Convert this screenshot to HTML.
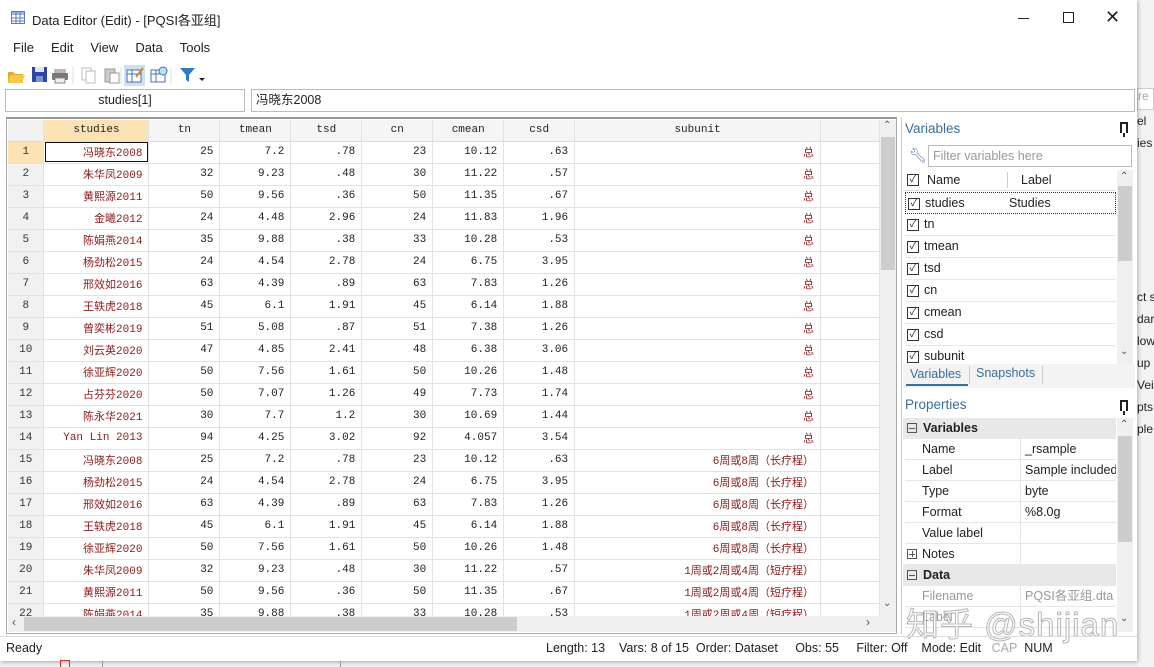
<!DOCTYPE html>
<html><head><meta charset="utf-8">
<style>
*{box-sizing:border-box;margin:0;padding:0}
body{width:1154px;height:667px;overflow:hidden;background:#f0f0f0;font-family:"Liberation Sans","Noto Sans CJK SC",sans-serif;font-size:13px;color:#222;position:relative}
.abs{position:absolute}
.win{left:0;top:0;width:1137px;height:661px;background:#fff;box-shadow:1px 1px 4px rgba(0,0,0,.3)}
.menu span{margin-right:17px}
table{border-collapse:collapse;table-layout:fixed;font-family:"Liberation Mono","Noto Sans CJK SC",monospace;font-size:11px}
td,th{height:22px;border-right:1px solid #e2e2e2;border-bottom:1px solid #e2e2e2;padding:0 6px;text-align:right;white-space:nowrap;overflow:hidden}
th{font-weight:normal;text-align:center;background:#f5f5f5;height:21px;border-bottom:1px solid #ddd}
td.rn{background:#f1f1f1;text-align:center;color:#333}
td.s{color:#8b1a1a}
.vrow{position:absolute;left:905px;width:211px;height:22px;border-bottom:1px solid #e6e6e6;font-size:12.5px;line-height:21px}
.cb{position:absolute;left:2px;top:5px;width:12px;height:12px;border:1px solid #333;font-size:10px;line-height:10px;text-align:center}
.prow{position:absolute;left:905px;width:211px;height:21px;font-size:12.5px;line-height:21px;border-bottom:1px solid #e6e6e6}
.prow .k{position:absolute;left:17px;width:98px;height:21px}
.prow .v{position:absolute;left:115px;border-left:1px solid #e6e6e6;padding-left:4px;height:21px;width:96px;overflow:hidden;white-space:nowrap}
.pin{position:absolute;width:8px;height:11px;border:2px solid #222;border-bottom:none}
.pin:after{content:"";position:absolute;left:1px;top:9px;width:2px;height:4px;background:#222}
</style></head><body>
<div class="abs" style="left:1137px;top:0;width:17px;height:667px;background:#f3f3f3"></div>
<div class="abs" style="left:1137px;top:88px;width:17px;height:22px;border:1px solid #ccc;background:#fff;color:#aaa;font-size:12px">re</div>
<div class="abs" style="left:1137px;top:110px;font-size:12px;line-height:22px">el<br>ies<br><br><br><br><br><br><br>ct s<br>dar<br>low<br>up<br>Veig<br>pts<br>ple</div>
<div class="abs win">
 <svg class="abs" style="left:11px;top:11px" width="14" height="13"><rect x=".5" y=".5" width="13" height="12" fill="#fff" stroke="#5a7db5"/><rect x="1" y="1" width="12" height="3" fill="#9bb5dd"/><path d="M1 7h12M1 10h12M5 1v12M9 1v12" stroke="#5a7db5"/></svg>
 <div class="abs" style="left:32px;top:10px;font-size:13px">Data Editor (Edit) - [PQSI各亚组]</div>
 <div class="abs" style="left:1018px;top:18px;width:11px;height:1px;background:#222"></div>
 <div class="abs" style="left:1063px;top:12px;width:11px;height:11px;border:1px solid #222"></div>
 <div class="abs" style="left:1105px;top:7px;font-size:18px;font-weight:300">✕</div>
 <div class="abs menu" style="left:13px;top:40px;font-size:13px"><span>File</span><span>Edit</span><span>View</span><span>Data</span><span>Tools</span></div>
 <svg class="abs" style="left:6px;top:64px" width="210" height="22">
  <path d="M2 8h5l2 2h8v9H2z" fill="#e8a82a"/><path d="M4 11h15l-3 8H2z" fill="#f7c948"/>
  <rect x="26" y="3" width="15" height="15" fill="#2c47a8"/><rect x="29" y="3" width="9" height="5" fill="#dfe6f5"/><rect x="30" y="12" width="7" height="6" fill="#7d93c9"/>
  <rect x="48" y="5" width="12" height="5" fill="#bbb"/><rect x="46" y="9" width="16" height="7" rx="1" fill="#777"/><rect x="49" y="14" width="10" height="5" fill="#eee" stroke="#888"/>
  <rect x="76" y="4" width="9" height="12" fill="#fff" stroke="#bbb"/><rect x="80" y="7" width="9" height="12" fill="#fff" stroke="#bbb"/>
  <rect x="99" y="5" width="10" height="13" fill="#ccc" stroke="#999"/><rect x="104" y="9" width="9" height="10" fill="#fff" stroke="#999"/>
  <rect x="118" y="1" width="21" height="21" fill="#cfe0f4"/><rect x="121" y="6" width="14" height="12" fill="#fff" stroke="#4a6fb0"/><path d="M121 10h14M126 6v12" stroke="#4a6fb0"/><path d="M130 13l7-9" stroke="#c98a2a" stroke-width="2"/>
  <rect x="145" y="6" width="14" height="12" fill="#fff" stroke="#4a6fb0"/><path d="M145 10h14M150 6v12" stroke="#4a6fb0"/><circle cx="157" cy="7" r="4" fill="#bde0f4" stroke="#3a7aa0"/>
  <path d="M174 4h15l-6 7v7l-3-2v-5z" fill="#2f7ad0"/><path d="M193 14h6l-3 3z" fill="#222"/>
  <path d="M67 3v17M115 3v17M165 3v17" stroke="#ddd"/>
 </svg>
 <div class="abs" style="left:5px;top:89px;width:240px;height:23px;border:1px solid #bbb;text-align:center;line-height:21px;font-size:12.5px">studies[1]</div>
 <div class="abs" style="left:251px;top:89px;width:884px;height:23px;border:1px solid #bbb;padding-left:4px;line-height:21px;font-size:12.5px">冯晓东2008</div>
 <div class="abs" style="left:6px;top:117px;width:891px;height:517px;border:1px solid #aaa;border-top:2px solid #999"></div>
 <div class="abs" style="left:8px;top:120px;width:872px;height:496px;overflow:hidden;background:#fff">
 <table>
  <colgroup><col style="width:36px"><col style="width:105px"><col style="width:71px"><col style="width:71px"><col style="width:71px"><col style="width:71px"><col style="width:71px"><col style="width:71px"><col style="width:246px"><col style="width:59px"></colgroup>
  <tr><th style="background:#f1f1f1"></th><th style="background:#fbe3b6">studies</th><th>tn</th><th>tmean</th><th>tsd</th><th>cn</th><th>cmean</th><th>csd</th><th>subunit</th><th></th></tr>
  <tr><td class="rn" style="background:#fbe3b6">1</td><td class="s" style="outline:1.5px solid #111;outline-offset:-2px">冯晓东2008</td><td>25</td><td>7.2</td><td>.78</td><td>23</td><td>10.12</td><td>.63</td><td class="s">总</td><td></td></tr>
  <tr><td class="rn">2</td><td class="s">朱华凤2009</td><td>32</td><td>9.23</td><td>.48</td><td>30</td><td>11.22</td><td>.57</td><td class="s">总</td><td></td></tr>
  <tr><td class="rn">3</td><td class="s">黄熙源2011</td><td>50</td><td>9.56</td><td>.36</td><td>50</td><td>11.35</td><td>.67</td><td class="s">总</td><td></td></tr>
  <tr><td class="rn">4</td><td class="s">金曦2012</td><td>24</td><td>4.48</td><td>2.96</td><td>24</td><td>11.83</td><td>1.96</td><td class="s">总</td><td></td></tr>
  <tr><td class="rn">5</td><td class="s">陈娟燕2014</td><td>35</td><td>9.88</td><td>.38</td><td>33</td><td>10.28</td><td>.53</td><td class="s">总</td><td></td></tr>
  <tr><td class="rn">6</td><td class="s">杨劲松2015</td><td>24</td><td>4.54</td><td>2.78</td><td>24</td><td>6.75</td><td>3.95</td><td class="s">总</td><td></td></tr>
  <tr><td class="rn">7</td><td class="s">邢效如2016</td><td>63</td><td>4.39</td><td>.89</td><td>63</td><td>7.83</td><td>1.26</td><td class="s">总</td><td></td></tr>
  <tr><td class="rn">8</td><td class="s">王轶虎2018</td><td>45</td><td>6.1</td><td>1.91</td><td>45</td><td>6.14</td><td>1.88</td><td class="s">总</td><td></td></tr>
  <tr><td class="rn">9</td><td class="s">曾奕彬2019</td><td>51</td><td>5.08</td><td>.87</td><td>51</td><td>7.38</td><td>1.26</td><td class="s">总</td><td></td></tr>
  <tr><td class="rn">10</td><td class="s">刘云英2020</td><td>47</td><td>4.85</td><td>2.41</td><td>48</td><td>6.38</td><td>3.06</td><td class="s">总</td><td></td></tr>
  <tr><td class="rn">11</td><td class="s">徐亚辉2020</td><td>50</td><td>7.56</td><td>1.61</td><td>50</td><td>10.26</td><td>1.48</td><td class="s">总</td><td></td></tr>
  <tr><td class="rn">12</td><td class="s">占芬芬2020</td><td>50</td><td>7.07</td><td>1.26</td><td>49</td><td>7.73</td><td>1.74</td><td class="s">总</td><td></td></tr>
  <tr><td class="rn">13</td><td class="s">陈永华2021</td><td>30</td><td>7.7</td><td>1.2</td><td>30</td><td>10.69</td><td>1.44</td><td class="s">总</td><td></td></tr>
  <tr><td class="rn">14</td><td class="s">Yan Lin 2013</td><td>94</td><td>4.25</td><td>3.02</td><td>92</td><td>4.057</td><td>3.54</td><td class="s">总</td><td></td></tr>
  <tr><td class="rn">15</td><td class="s">冯晓东2008</td><td>25</td><td>7.2</td><td>.78</td><td>23</td><td>10.12</td><td>.63</td><td class="s">6周或8周（长疗程）</td><td></td></tr>
  <tr><td class="rn">16</td><td class="s">杨劲松2015</td><td>24</td><td>4.54</td><td>2.78</td><td>24</td><td>6.75</td><td>3.95</td><td class="s">6周或8周（长疗程）</td><td></td></tr>
  <tr><td class="rn">17</td><td class="s">邢效如2016</td><td>63</td><td>4.39</td><td>.89</td><td>63</td><td>7.83</td><td>1.26</td><td class="s">6周或8周（长疗程）</td><td></td></tr>
  <tr><td class="rn">18</td><td class="s">王轶虎2018</td><td>45</td><td>6.1</td><td>1.91</td><td>45</td><td>6.14</td><td>1.88</td><td class="s">6周或8周（长疗程）</td><td></td></tr>
  <tr><td class="rn">19</td><td class="s">徐亚辉2020</td><td>50</td><td>7.56</td><td>1.61</td><td>50</td><td>10.26</td><td>1.48</td><td class="s">6周或8周（长疗程）</td><td></td></tr>
  <tr><td class="rn">20</td><td class="s">朱华凤2009</td><td>32</td><td>9.23</td><td>.48</td><td>30</td><td>11.22</td><td>.57</td><td class="s">1周或2周或4周（短疗程）</td><td></td></tr>
  <tr><td class="rn">21</td><td class="s">黄熙源2011</td><td>50</td><td>9.56</td><td>.36</td><td>50</td><td>11.35</td><td>.67</td><td class="s">1周或2周或4周（短疗程）</td><td></td></tr>
  <tr><td class="rn">22</td><td class="s">陈娟燕2014</td><td>35</td><td>9.88</td><td>.38</td><td>33</td><td>10.28</td><td>.53</td><td class="s">1周或2周或4周（短疗程）</td><td></td></tr>
 </table>
 </div>
 <div class="abs" style="left:880px;top:120px;width:16px;height:496px;background:#f0f0f0"></div>
 <div class="abs" style="left:881px;top:137px;width:14px;height:133px;background:#cdcdcd"></div>
 <div class="abs" style="left:883px;top:120px;font-size:10px;color:#555">⌃</div>
 <div class="abs" style="left:883px;top:598px;font-size:10px;color:#555">⌄</div>
 <div class="abs" style="left:8px;top:616px;width:888px;height:16px;background:#f0f0f0"></div>
 <div class="abs" style="left:24px;top:617px;width:493px;height:14px;background:#cdcdcd"></div>
 <div class="abs" style="left:12px;top:615px;font-size:12px;color:#555">‹</div>
 <div class="abs" style="left:866px;top:615px;font-size:12px;color:#555">›</div>
 <div class="abs" style="left:901px;top:117px;width:236px;height:517px;border-left:1px solid #ccc;background:#fff"></div>
 <div class="abs" style="left:905px;top:121px;color:#3a6d99;font-size:13.5px">Variables</div>
 <div class="pin" style="left:1120px;top:122px"></div>
 <div class="abs" style="left:909px;top:147px;color:#5a7ab0;font-size:14px">🔧︎</div>
 <div class="abs" style="left:928px;top:145px;width:204px;height:22px;border:1px solid #bbb;color:#999;padding-left:4px;line-height:20px;font-size:12.5px">Filter variables here</div>
 <div class="abs" style="left:903px;top:170px;width:213px;height:21px;background:#fff;border-bottom:1px solid #ddd;font-size:12.5px;line-height:20px">
  <div class="cb" style="left:4px;top:4px">✓</div><span style="position:absolute;left:24px">Name</span><div style="position:absolute;left:104px;top:2px;width:1px;height:16px;background:#ccc"></div><span style="position:absolute;left:118px">Label</span></div>
 <div class="vrow" style="top:192px;border:1px dotted #333"><div class="cb">✓</div><span style="position:absolute;left:19px">studies</span><span style="position:absolute;left:103px">Studies</span></div>
 <div class="vrow" style="top:214px"><div class="cb">✓</div><span style="position:absolute;left:19px">tn</span></div>
 <div class="vrow" style="top:236px"><div class="cb">✓</div><span style="position:absolute;left:19px">tmean</span></div>
 <div class="vrow" style="top:258px"><div class="cb">✓</div><span style="position:absolute;left:19px">tsd</span></div>
 <div class="vrow" style="top:280px"><div class="cb">✓</div><span style="position:absolute;left:19px">cn</span></div>
 <div class="vrow" style="top:302px"><div class="cb">✓</div><span style="position:absolute;left:19px">cmean</span></div>
 <div class="vrow" style="top:324px"><div class="cb">✓</div><span style="position:absolute;left:19px">csd</span></div>
 <div class="vrow" style="top:346px;height:18px;overflow:hidden;border:none"><div class="cb">✓</div><span style="position:absolute;left:19px">subunit</span></div>
 <div class="abs" style="left:1117px;top:170px;width:16px;height:194px;background:#f0f0f0"></div>
 <div class="abs" style="left:1118px;top:186px;width:14px;height:75px;background:#cdcdcd"></div>
 <div class="abs" style="left:1120px;top:171px;font-size:10px;color:#555">⌃</div>
 <div class="abs" style="left:1120px;top:346px;font-size:10px;color:#555">⌄</div>
 <div class="abs" style="left:903px;top:364px;width:232px;height:24px;background:#f3f3f3"></div>
 <div class="abs" style="left:910px;top:367px;color:#3a6d99;font-size:12.5px">Variables</div>
 <div class="abs" style="left:906px;top:384px;width:62px;height:2px;background:#3a6d99"></div>
 <div class="abs" style="left:969px;top:366px;width:74px;height:18px;border-right:1px solid #ccc;border-left:1px solid #ccc;color:#3a6d99;font-size:12.5px;padding-left:6px">Snapshots</div>
 <div class="abs" style="left:905px;top:397px;color:#3a6d99;font-size:13.5px">Properties</div>
 <div class="pin" style="left:1120px;top:400px"></div>
 <div class="abs" style="left:903px;top:418px;width:213px;height:21px;background:#e8e8e8;font-weight:bold;font-size:12.5px;line-height:21px;padding-left:20px">Variables</div>
 <div class="abs" style="left:907px;top:423px;width:10px;height:10px;border:1px solid #555"></div><div class="abs" style="left:909px;top:428px;width:6px;height:1px;background:#555"></div>
 <div class="prow" style="top:439px"><span class="k">Name</span><span class="v">_rsample</span></div>
 <div class="prow" style="top:460px"><span class="k">Label</span><span class="v">Sample included</span></div>
 <div class="prow" style="top:481px"><span class="k">Type</span><span class="v">byte</span></div>
 <div class="prow" style="top:502px"><span class="k">Format</span><span class="v">%8.0g</span></div>
 <div class="prow" style="top:523px"><span class="k">Value label</span><span class="v"></span></div>
 <div class="prow" style="top:544px"><span class="k">Notes</span><span class="v"></span></div>
 <div class="abs" style="left:907px;top:549px;width:10px;height:10px;border:1px solid #555"></div><div class="abs" style="left:909px;top:554px;width:6px;height:1px;background:#555"></div><div class="abs" style="left:912px;top:551px;width:1px;height:6px;background:#555"></div>
 <div class="abs" style="left:903px;top:565px;width:213px;height:21px;background:#e8e8e8;font-weight:bold;font-size:12.5px;line-height:21px;padding-left:20px">Data</div>
 <div class="abs" style="left:907px;top:570px;width:10px;height:10px;border:1px solid #555"></div><div class="abs" style="left:909px;top:575px;width:6px;height:1px;background:#555"></div>
 <div class="prow" style="top:586px;color:#999"><span class="k">Filename</span><span class="v" style="color:#999">PQSI各亚组.dta</span></div>
 <div class="prow" style="top:607px;color:#999"><span class="k">Label</span><span class="v"></span></div>
 <div class="abs" style="left:1117px;top:418px;width:16px;height:214px;background:#f0f0f0"></div>
 <div class="abs" style="left:1118px;top:436px;width:14px;height:106px;background:#cdcdcd"></div>
 <div class="abs" style="left:1120px;top:419px;font-size:10px;color:#555">⌃</div>
 <div class="abs" style="left:1120px;top:613px;font-size:10px;color:#555">⌄</div>
 <div class="abs" style="left:906px;top:598px;font-size:33px;color:rgba(255,255,255,.85);-webkit-text-stroke:1px rgba(120,120,120,.55);letter-spacing:1px">知乎 @shijian</div>
 <div class="abs" style="left:0;top:636px;width:1137px;height:1px;background:#ddd"></div>
 <div class="abs" style="left:6px;top:641px;font-size:12.5px">Ready</div>
 <div class="abs" style="left:546px;top:641px;font-size:12.5px;white-space:nowrap">Length: 13 &nbsp;&nbsp;&nbsp;Vars: 8 of 15 &nbsp;Order: Dataset &nbsp;&nbsp;&nbsp;&nbsp;Obs: 55 &nbsp;&nbsp;&nbsp;&nbsp;Filter: Off &nbsp;&nbsp;&nbsp;Mode: Edit &nbsp;&nbsp;<span style="color:#aaa">CAP</span>&nbsp;&nbsp;NUM</div>
</div>
<div class="abs" style="left:102px;top:661px;width:1px;height:6px;background:#999"></div>
<div class="abs" style="left:340px;top:661px;width:1px;height:6px;background:#999"></div>
<div class="abs" style="left:60px;top:660px;width:10px;height:7px;border:1px solid #c33;border-bottom:none"></div>
</body></html>
